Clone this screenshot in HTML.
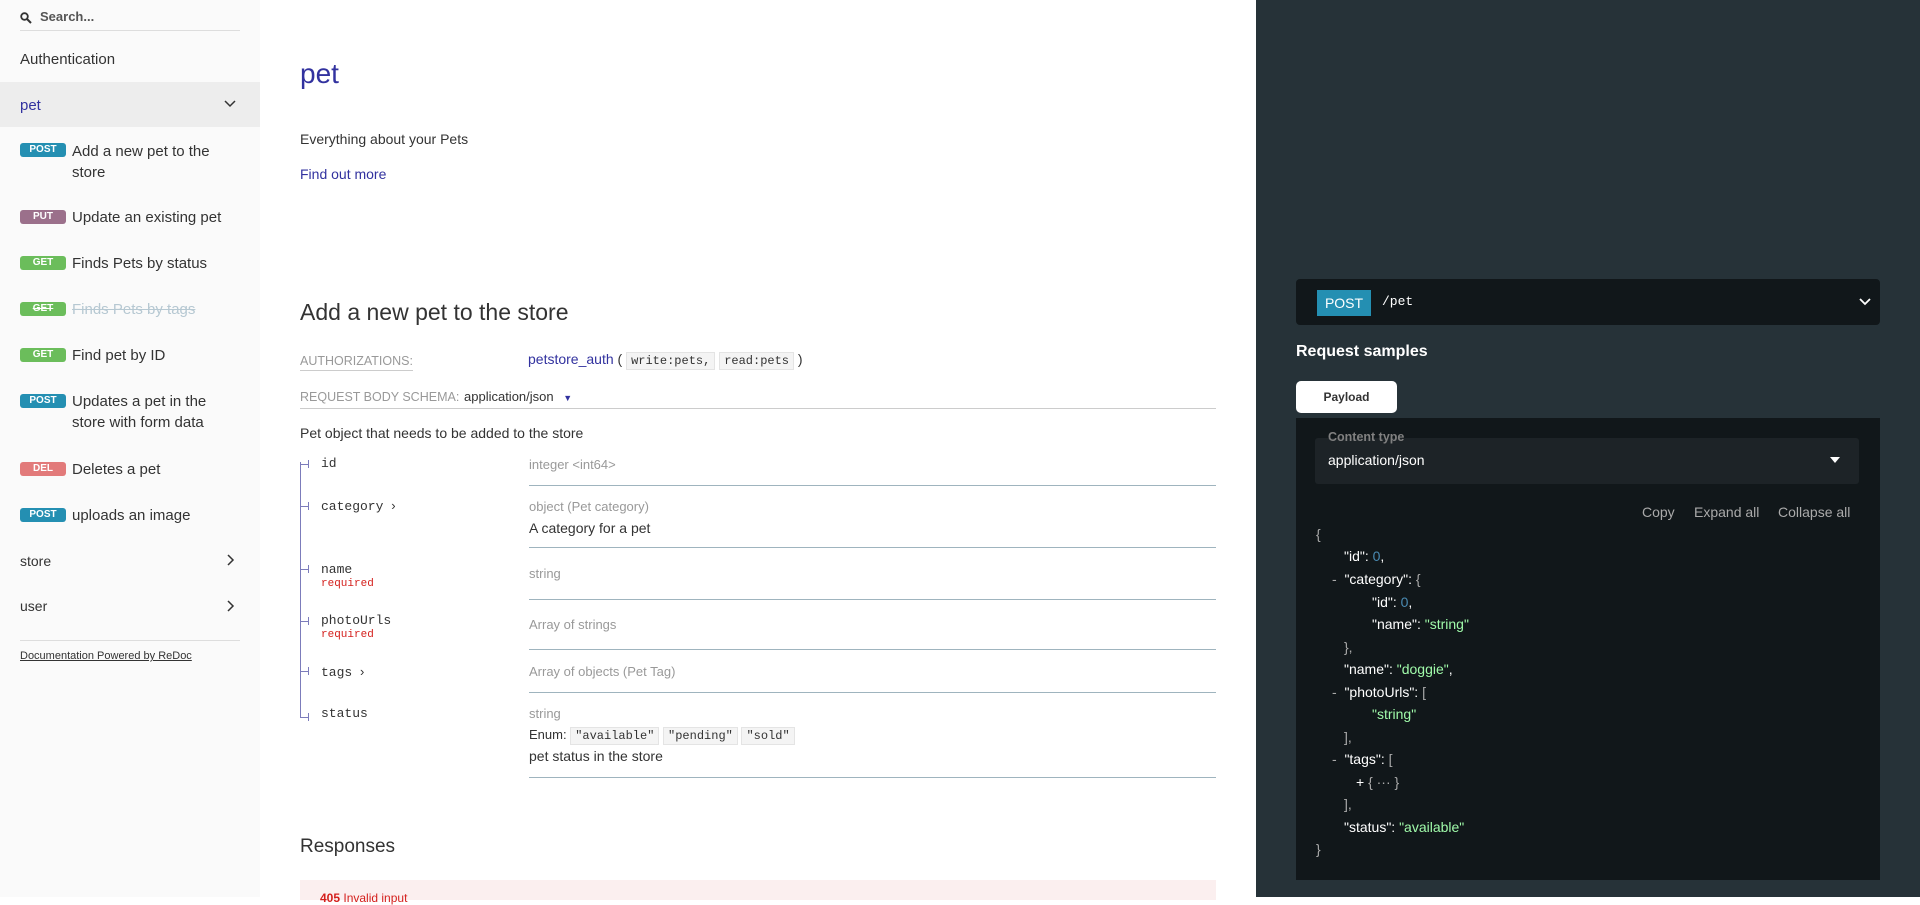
<!DOCTYPE html>
<html><head><meta charset="utf-8"><style>
*{margin:0;padding:0;box-sizing:border-box}
body{width:1920px;height:897px;overflow:hidden;font-family:"Liberation Sans",sans-serif;background:#fff;position:relative}
.a{position:absolute;white-space:nowrap}
#side{position:absolute;left:0;top:0;width:260px;height:897px;background:#fafafa}
.it{position:absolute;left:20px;font-size:15px;color:#333;line-height:21px}
.b{position:absolute;left:20px;width:46px;height:14px;border-radius:3px;color:#fff;font-size:10px;font-weight:bold;text-align:center;line-height:14px}
.post{background:#248fb2}.put{background:#9b708b}.get{background:#6bbd5b}.del{background:#e27a7a}
.t{position:absolute;left:72px;font-size:15px;color:#333;line-height:21px}
#main{position:absolute;left:260px;top:0;width:996px;height:897px}
.fn{font-family:"Liberation Mono",monospace;font-size:13px;color:#333}
.req{font-family:"Liberation Mono",monospace;font-size:11px;color:#d41f1c}
.ty{font-size:13px;color:#999}
.ln{position:absolute;left:529px;width:687px;height:1px;background:#9fb4be}
.code{font-family:"Liberation Mono",monospace;font-size:12px;background:#f4f4f4;border:1px solid #e4e4e4;padding:1px 4px;color:#333}
#right{position:absolute;left:1256px;top:0;width:664px;height:897px;background:#263238}
.j{position:absolute;font-size:14px;color:#fff;white-space:pre}
.s{color:#a0fbaa}.n{color:#4a8bb3}.p{color:#aaa}
</style></head><body>
<div id="side">
 <svg class="a" style="left:20px;top:12px" width="12" height="12" viewBox="0 0 12 12"><circle cx="4.5" cy="4.5" r="3.3" fill="none" stroke="#333" stroke-width="1.8"/><path d="M7 7l4 4" stroke="#333" stroke-width="2"/></svg>
 <div class="a" style="left:40px;top:9px;font-size:13px;font-weight:bold;color:#555">Search...</div>
 <div class="a" style="left:20px;top:30px;width:220px;height:1px;background:#ddd"></div>
 <div class="it" style="top:49px">Authentication</div>
 <div class="a" style="left:0;top:82px;width:260px;height:45px;background:#ededed"></div>
 <div class="it" style="top:95px;color:#32329f">pet</div>
 <svg class="a" style="left:224px;top:100px" width="12" height="8" viewBox="0 0 12 8"><path d="M1 1l5 5 5-5" fill="none" stroke="#333" stroke-width="1.5"/></svg>
 <div class="b post" style="top:143px">POST</div><div class="t" style="top:141px">Add a new pet to the<br>store</div>
 <div class="b put" style="top:210px">PUT</div><div class="t" style="top:207px">Update an existing pet</div>
 <div class="b get" style="top:256px">GET</div><div class="t" style="top:253px">Finds Pets by status</div>
 <div class="b get" style="top:302px;text-decoration:line-through">GET</div><div class="t" style="top:299px;color:#b6c8d2;text-decoration:line-through">Finds Pets by tags</div>
 <div class="b get" style="top:348px">GET</div><div class="t" style="top:345px">Find pet by ID</div>
 <div class="b post" style="top:394px">POST</div><div class="t" style="top:391px">Updates a pet in the<br>store with form data</div>
 <div class="b del" style="top:462px">DEL</div><div class="t" style="top:459px">Deletes a pet</div>
 <div class="b post" style="top:508px">POST</div><div class="t" style="top:505px">uploads an image</div>
 <div class="it" style="top:551px;font-size:14px">store</div>
 <svg class="a" style="left:227px;top:554px" width="8" height="12" viewBox="0 0 8 12"><path d="M1 1l5 5-5 5" fill="none" stroke="#333" stroke-width="1.5"/></svg>
 <div class="it" style="top:596px;font-size:14px">user</div>
 <svg class="a" style="left:227px;top:600px" width="8" height="12" viewBox="0 0 8 12"><path d="M1 1l5 5-5 5" fill="none" stroke="#333" stroke-width="1.5"/></svg>
 <div class="a" style="left:20px;top:640px;width:220px;height:1px;background:#ddd"></div>
 <div class="a" style="left:20px;top:650px;font-size:11px;color:#333;text-decoration:underline">Documentation Powered by ReDoc</div>
</div>
<div id="main">
 <div class="a" style="left:40px;top:58px;font-size:28px;color:#32329f">pet</div>
 <div class="a" style="left:40px;top:131px;font-size:14px;color:#333">Everything about your Pets</div>
 <div class="a" style="left:40px;top:166px;font-size:14px;color:#32329f">Find out more</div>
 <div class="a" style="left:40px;top:299px;font-size:23px;color:#333">Add a new pet to the store</div>
 <div class="a" style="left:40px;top:354px;font-size:12.5px;color:#999;border-bottom:1px solid #ccc;padding-bottom:2px">AUTHORIZATIONS:</div>
 <div class="a" style="left:268px;top:351px;font-size:14px;color:#333"><span style="color:#32329f">petstore_auth</span> ( <span class="code">write:pets,</span> <span class="code">read:pets</span> )</div>
 <div class="a" style="left:40px;top:390px;font-size:12.5px;color:#999">REQUEST BODY SCHEMA:</div>
 <div class="a" style="left:204px;top:389px;font-size:13px;color:#333">application/json <span style="color:#32329f;font-size:9px;margin-left:6px">▼</span></div>
 <div class="a" style="left:40px;top:408px;width:916px;height:1px;background:#ccc"></div>
 <div class="a" style="left:40px;top:425px;font-size:14px;color:#333">Pet object that needs to be added to the store</div>
 <div class="a" style="left:40px;top:462px;width:1px;height:256px;background:#7c7cbb"></div>
 <div class="a" style="left:40px;top:464px;width:8px;height:1px;background:#7c7cbb"></div><div class="a" style="left:48px;top:460px;width:1px;height:8px;background:#7c7cbb"></div>
 <div class="a" style="left:40px;top:506px;width:8px;height:1px;background:#7c7cbb"></div><div class="a" style="left:48px;top:502px;width:1px;height:8px;background:#7c7cbb"></div>
 <div class="a" style="left:40px;top:569px;width:8px;height:1px;background:#7c7cbb"></div><div class="a" style="left:48px;top:565px;width:1px;height:8px;background:#7c7cbb"></div>
 <div class="a" style="left:40px;top:621px;width:8px;height:1px;background:#7c7cbb"></div><div class="a" style="left:48px;top:617px;width:1px;height:8px;background:#7c7cbb"></div>
 <div class="a" style="left:40px;top:671px;width:8px;height:1px;background:#7c7cbb"></div><div class="a" style="left:48px;top:667px;width:1px;height:8px;background:#7c7cbb"></div>
 <div class="a" style="left:40px;top:717px;width:8px;height:1px;background:#7c7cbb"></div><div class="a" style="left:48px;top:713px;width:1px;height:8px;background:#7c7cbb"></div>
 <div class="a fn" style="left:61px;top:456px">id</div>
 <div class="a ty" style="left:269px;top:457px">integer &lt;int64&gt;</div>
 <div class="ln" style="left:269px;top:485px"></div>
 <div class="a fn" style="left:61px;top:498px">category <span style="font-family:'Liberation Sans'">›</span></div>
 <div class="a ty" style="left:269px;top:499px">object (Pet category)</div>
 <div class="a" style="left:269px;top:520px;font-size:14px;color:#333">A category for a pet</div>
 <div class="ln" style="left:269px;top:547px"></div>
 <div class="a fn" style="left:61px;top:562px">name</div><div class="a req" style="left:61px;top:578px">required</div>
 <div class="a ty" style="left:269px;top:566px">string</div>
 <div class="ln" style="left:269px;top:599px"></div>
 <div class="a fn" style="left:61px;top:613px">photoUrls</div><div class="a req" style="left:61px;top:629px">required</div>
 <div class="a ty" style="left:269px;top:617px">Array of strings</div>
 <div class="ln" style="left:269px;top:649px"></div>
 <div class="a fn" style="left:61px;top:664px">tags <span style="font-family:'Liberation Sans'">›</span></div>
 <div class="a ty" style="left:269px;top:664px">Array of objects (Pet Tag)</div>
 <div class="ln" style="left:269px;top:692px"></div>
 <div class="a fn" style="left:61px;top:706px">status</div>
 <div class="a ty" style="left:269px;top:706px">string</div>
 <div class="a" style="left:269px;top:727px;font-size:13px;color:#333">Enum: <span class="code">"available"</span> <span class="code">"pending"</span> <span class="code">"sold"</span></div>
 <div class="a" style="left:269px;top:748px;font-size:14px;color:#333">pet status in the store</div>
 <div class="ln" style="left:269px;top:777px"></div>
 <div class="a" style="left:40px;top:836px;font-size:19px;color:#333">Responses</div>
 <div class="a" style="left:40px;top:880px;width:916px;height:20px;background:#fbefef"></div>
 <div class="a" style="left:60px;top:891px;font-size:12px;color:#d41f1c;font-weight:bold">405 <span style="font-weight:normal">Invalid input</span></div>
</div>
<div id="right">
 <div class="a" style="left:40px;top:279px;width:584px;height:46px;background:#11171a;border-radius:4px"></div>
 <div class="a" style="left:61px;top:290px;width:54px;height:26px;background:#248fb2;color:#fff;font-size:14px;text-align:center;line-height:26px">POST</div>
 <div class="a" style="left:126px;top:294px;font-family:'Liberation Mono',monospace;font-size:13px;color:#fff">/pet</div>
 <svg class="a" style="left:603px;top:298px" width="12" height="8" viewBox="0 0 12 8"><path d="M1 1l5 5 5-5" fill="none" stroke="#fff" stroke-width="1.8"/></svg>
 <div class="a" style="left:40px;top:343px;font-size:16px;font-weight:bold;color:#fff">Request samples</div>
 <div class="a" style="left:40px;top:381px;width:101px;height:32px;background:#fff;border-radius:5px;text-align:center;line-height:32px;font-size:12px;font-weight:bold;color:#333">Payload</div>
 <div class="a" style="left:40px;top:418px;width:584px;height:462px;background:#11171a"></div>
 <div class="a" style="left:59px;top:438px;width:544px;height:46px;background:#1d2327;border-radius:3px"></div>
 <div class="a" style="left:72px;top:430px;font-size:12.5px;font-weight:bold;color:#808080">Content type</div>
 <div class="a" style="left:72px;top:452px;font-size:14px;color:#fff">application/json</div>
 <svg class="a" style="left:573px;top:457px" width="12" height="6" viewBox="0 0 12 6"><path d="M1 0h10l-5 6z" fill="#fff"/></svg>
 <div class="a" style="left:386px;top:504px;font-size:14px;color:#aaa">Copy</div>
 <div class="a" style="left:438px;top:504px;font-size:14px;color:#aaa">Expand all</div>
 <div class="a" style="left:522px;top:504px;font-size:14px;color:#aaa">Collapse all</div>
 <div class="j" style="left:60px;top:526px"><span class="p">{</span></div>
 <div class="j" style="left:88px;top:548px">"id": <span class="n">0</span>,</div>
 <div class="j" style="left:76px;top:571px"><span class="p">-</span>  "category": <span class="p">{</span></div>
 <div class="j" style="left:116px;top:594px">"id": <span class="n">0</span>,</div>
 <div class="j" style="left:116px;top:616px">"name": <span class="s">"string"</span></div>
 <div class="j" style="left:88px;top:639px"><span class="p">},</span></div>
 <div class="j" style="left:88px;top:661px">"name": <span class="s">"doggie"</span>,</div>
 <div class="j" style="left:76px;top:684px"><span class="p">-</span>  "photoUrls": <span class="p">[</span></div>
 <div class="j" style="left:116px;top:706px"><span class="s">"string"</span></div>
 <div class="j" style="left:88px;top:729px"><span class="p">],</span></div>
 <div class="j" style="left:76px;top:751px"><span class="p">-</span>  "tags": <span class="p">[</span></div>
 <div class="j" style="left:100px;top:774px">+ <span class="p">{ ··· }</span></div>
 <div class="j" style="left:88px;top:796px"><span class="p">],</span></div>
 <div class="j" style="left:88px;top:819px">"status": <span class="s">"available"</span></div>
 <div class="j" style="left:60px;top:841px"><span class="p">}</span></div>
</div>
</body></html>
